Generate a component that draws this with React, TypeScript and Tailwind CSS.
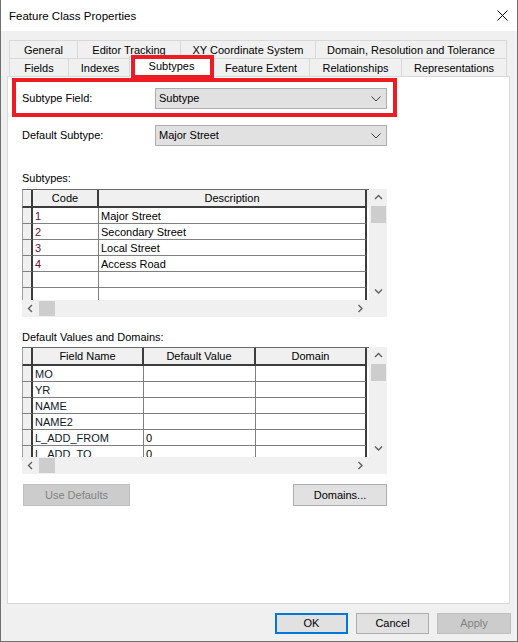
import React from "react";

type Dir = "up" | "down" | "left" | "right";

const Chevron = ({ dir }: { dir: Dir }) => {
  const vert = dir === "up" || dir === "down";
  const d: Record<Dir, string> = {
    up: "M1 5 L4.5 1.5 L8 5",
    down: "M1 1.5 L4.5 5 L8 1.5",
    left: "M5 1 L1.5 4.5 L5 8",
    right: "M1.5 1 L5 4.5 L1.5 8",
  };
  return (
    <svg
      width={vert ? 9 : 7}
      height={vert ? 7 : 9}
      viewBox={vert ? "0 0 9 7" : "0 0 7 9"}
    >
      <path d={d[dir]} fill="none" stroke="#606060" strokeWidth="1.4" />
    </svg>
  );
};

const ComboArrow = () => (
  <svg width="10" height="6" viewBox="0 0 10 6">
    <path d="M0.5 0.5 L5 5 L9.5 0.5" fill="none" stroke="#404040" strokeWidth="1" />
  </svg>
);

const CloseGlyph = () => (
  <svg width="11" height="11" viewBox="0 0 11 11">
    <path d="M0.5 0.5 L10.5 10.5 M10.5 0.5 L0.5 10.5" stroke="#000" strokeWidth="1" />
  </svg>
);

type Column = { label: string; w: string };

type GridProps = {
  cols: Column[];
  rows: string[][];
  body: string;
  firstColText: string;
};

function DataGrid({ cols, rows, body, firstColText }: GridProps) {
  return (
    <div className="w-[365px] flex flex-col bg-[#f0f0f0]">
      <div className="flex">
        <div className={`w-[347px] ${body} overflow-hidden bg-white flex flex-col`}>
          {/* header */}
          <div className="flex h-[19px] shrink-0 border-t border-[#696969] bg-[#f0f0f0]">
            <div className="w-[11px] shrink-0 border-l border-l-[#a0a0a0] border-r-2 border-r-[#3c3c3c] border-b-2 border-b-[#3c3c3c]" />
            {cols.map((c) => (
              <div
                key={c.label}
                className={`${c.w} shrink-0 flex items-center justify-center pt-[1px] border-r-2 border-r-[#3c3c3c] border-b-2 border-b-[#3c3c3c] text-black`}
              >
                {c.label}
              </div>
            ))}
          </div>
          {rows.map((r, i) => (
            <div key={i} className="flex h-[16px] shrink-0">
              <div className="w-[11px] shrink-0 bg-[#f0f0f0] border-l border-l-[#a0a0a0] border-r-2 border-r-[#3c3c3c] border-b border-b-[#808080]" />
              {cols.map((c, j) => (
                <div
                  key={c.label}
                  className={`${c.w} shrink-0 flex items-center pl-[2px] pt-[1px] border-b border-b-[#808080] ${
                    j === cols.length - 1 ? "border-r-2 border-r-[#3c3c3c]" : "border-r border-r-[#808080]"
                  } ${j === 0 ? firstColText : "text-black"}`}
                >
                  {r[j]}
                </div>
              ))}
            </div>
          ))}
        </div>
        {/* vertical scroll bar */}
        <div className={`w-[18px] ${body} flex flex-col`}>
          <div className="h-[17px] flex items-center justify-center">
            <Chevron dir="up" />
          </div>
          <div className="ml-[2px] w-[15px] h-[17px] bg-[#cdcdcd]" />
          <div className="flex-1" />
          <div className="h-[17px] flex items-center justify-center">
            <Chevron dir="down" />
          </div>
        </div>
      </div>
      {/* horizontal scroll bar */}
      <div className="flex h-[17px]">
        <div className="w-[347px] flex items-center">
          <div className="w-[17px] h-[17px] flex items-center justify-center">
            <Chevron dir="left" />
          </div>
          <div className="w-[16px] h-[15px] bg-[#cdcdcd]" />
          <div className="flex-1" />
          <div className="w-[17px] h-[17px] flex items-center justify-center">
            <Chevron dir="right" />
          </div>
        </div>
        <div className="w-[18px]" />
      </div>
    </div>
  );
}

const topTabs = [
  { label: "General", w: "w-[68px]" },
  { label: "Editor Tracking", w: "w-[103px]" },
  { label: "XY Coordinate System", w: "w-[135px]" },
  { label: "Domain, Resolution and Tolerance", w: "w-[192px]" },
];

const bottomTabs = [
  { label: "Fields", w: "w-[59px]" },
  { label: "Indexes", w: "w-[63px]" },
  { label: "Subtypes", w: "w-[85px]", active: true },
  { label: "Feature Extent", w: "w-[97px]" },
  { label: "Relationships", w: "w-[92px]" },
  { label: "Representations", w: "w-[106px]" },
];

const subtypeCols: Column[] = [
  { label: "Code", w: "w-[66px]" },
  { label: "Description", w: "w-[268px]" },
];

const subtypeRows = [
  ["1", "Major Street"],
  ["2", "Secondary Street"],
  ["3", "Local Street"],
  ["4", "Access Road"],
  ["", ""],
  ["", ""],
];

const defaultCols: Column[] = [
  { label: "Field Name", w: "w-[111px]" },
  { label: "Default Value", w: "w-[112px]" },
  { label: "Domain", w: "w-[111px]" },
];

const defaultRows = [
  ["MO", "", ""],
  ["YR", "", ""],
  ["NAME", "", ""],
  ["NAME2", "", ""],
  ["L_ADD_FROM", "0", ""],
  ["L_ADD_TO", "0", ""],
];

function Combo({ value }: { value: string }) {
  return (
    <div className="w-[232px] h-[21px] bg-[#e1e1e1] border border-[#adadad] flex items-center justify-between pl-[3px] pr-[5px] text-black">
      <span>{value}</span>
      <ComboArrow />
    </div>
  );
}

export default function App() {
  return (
    <div className="w-[518px] h-[642px] bg-[#f0f0f0] border-l border-r border-b border-[#707070] flex flex-col font-['Liberation_Sans',Arial,sans-serif] text-[11px] text-black select-none">
      {/* title bar */}
      <div className="h-[31px] bg-white flex items-center justify-between pl-[8px] pr-[9px]">
        <span className="text-[11.5px] pt-[2px]">Feature Class Properties</span>
        <CloseGlyph />
      </div>

      {/* tab strip */}
      <div className="relative mt-[9px] pl-[8px]">
        <div className="flex h-[18px]">
          {topTabs.map((t, i) => (
            <div
              key={t.label}
              className={`${t.w} h-[18px] flex items-center justify-center pt-[1px] border-t border-l border-[#d9d9d9] ${
                i === topTabs.length - 1 ? "border-r" : ""
              }`}
            >
              {t.label}
            </div>
          ))}
        </div>
        <div className="flex h-[18px]">
          {bottomTabs.map((t, i) =>
            t.active ? (
              <div
                key={t.label}
                className={`${t.w} relative z-10 -mx-[2px] -mt-[2px] h-[21px] bg-white flex items-center justify-center pb-[2px] border-t border-l border-r border-[#d9d9d9]`}
              >
                {t.label}
              </div>
            ) : (
              <div
                key={t.label}
                className={`${t.w} h-[18px] flex items-center justify-center pt-[1px] border-t border-l border-[#d9d9d9] ${
                  i === bottomTabs.length - 1 ? "border-r" : ""
                }`}
              >
                {t.label}
              </div>
            )
          )}
        </div>
        {/* highlight drawn around the active tab */}
        <div className="absolute left-[130px] top-[15px] w-[83px] h-[24px] border-4 border-[#ed1c24] z-20 pointer-events-none" />
      </div>

      {/* tab page */}
      <div className="ml-[6px] w-[503px] h-[528px] bg-white border border-[#d9d9d9] flex flex-col">
        <div className="mt-[1px] ml-[4px] w-[385px] border-4 border-[#ed1c24] flex items-center pl-[6px] pt-[6px] pb-[4px]">
          <span className="w-[133px]">Subtype Field:</span>
          <Combo value="Subtype" />
        </div>

        <div className="mt-[8px] ml-[14px] flex items-center">
          <span className="w-[133px]">Default Subtype:</span>
          <Combo value="Major Street" />
        </div>

        <div className="mt-[24px] ml-[14px] h-[14px] leading-[14px] pt-[1px]">Subtypes:</div>
        <div className="mt-[5px] ml-[14px]">
          <DataGrid cols={subtypeCols} rows={subtypeRows} body="h-[111px]" firstColText="text-[#6a0a36]" />
        </div>

        <div className="mt-[13px] ml-[14px] h-[14px] leading-[14px]">Default Values and Domains:</div>
        <div className="mt-[3px] ml-[14px]">
          <DataGrid cols={defaultCols} rows={defaultRows} body="h-[110px]" firstColText="text-[#101828]" />
        </div>

        <div className="mt-[10px] ml-[15px] w-[364px] flex items-start justify-between">
          <div className="w-[107px] h-[22px] bg-[#cccccc] border border-[#bfbfbf] text-[#838383] flex items-center justify-center">
            Use Defaults
          </div>
          <div className="w-[94px] h-[22px] bg-[#e1e1e1] border border-[#adadad] flex items-center justify-center">
            Domains...
          </div>
        </div>
      </div>

      {/* dialog buttons */}
      <div className="mt-[9px] pr-[6px] flex justify-end gap-[8px]">
        <div className="w-[73px] h-[21px] bg-[#e1e1e1] border-2 border-[#0078d7] flex items-center justify-center">OK</div>
        <div className="w-[73px] h-[21px] bg-[#e1e1e1] border border-[#adadad] flex items-center justify-center">Cancel</div>
        <div className="w-[74px] h-[21px] bg-[#cccccc] border border-[#bfbfbf] text-[#838383] flex items-center justify-center">Apply</div>
      </div>
    </div>
  );
}
